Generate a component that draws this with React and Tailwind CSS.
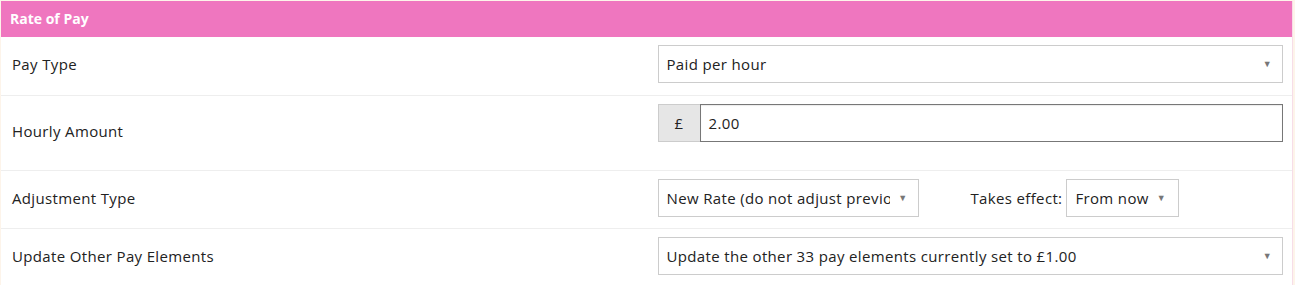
import React from 'react'

function Caret() {
  return <span className="text-[9px] text-[#777] shrink-0 ml-[8px]">▼</span>
}

function Select({ value, className = '', fit }) {
  return (
    <div className={`h-[38px] border border-[#ccc] bg-white flex items-center pl-[8px] pr-[10px] text-[15px] text-[#222] ${className}`}>
      <span className={`${fit ? '' : 'flex-1 min-w-0'} whitespace-nowrap overflow-hidden`}>{value}</span>
      <Caret />
    </div>
  )
}

function Row({ label, children, h, last }) {
  return (
    <div className={`grid grid-cols-2 ${last ? '' : 'border-b border-[#eee]'} ${h}`}>
      <div className="pl-[11px] pb-[3px] text-[15px] text-[#222] self-center">{label}</div>
      <div className="pl-[11px] pr-[9px] pt-[8px]">{children}</div>
    </div>
  )
}

export default function App() {
  return (
    <div className="w-[1295px] h-[285px] bg-[#fdf4ea] pt-[1px] pl-[1px] pr-[2px] tracking-[0.35px]" style={{ fontFamily: '"Open Sans", Lato, sans-serif' }}>
      <div className="bg-white border-r border-[#f7dde8]">
        <div className="h-[36px] bg-[#ef76bf] flex items-center pl-[9px] pb-[2px] text-white font-bold text-[14px] tracking-normal">Rate of Pay</div>
        <Row label="Pay Type" h="h-[59px]">
          <Select value="Paid per hour" />
        </Row>
        <Row label="Hourly Amount" h="h-[75px]">
          <div className="flex h-[38px]">
            <div className="w-[42px] bg-[#e6e6e6] border border-[#ccc] border-r-0 flex items-center justify-center text-[15px] text-[#222]">£</div>
            <div className="flex-1 border border-[#777] flex items-center pl-[8px] text-[15px] text-[#222] shadow-[inset_0_1px_1px_rgba(0,0,0,0.08)]">2.00</div>
          </div>
        </Row>
        <Row label="Adjustment Type" h="h-[58px]">
          <div className="flex items-center">
            <Select value="New Rate (do not adjust previous)" className="w-[261px]" />
            <span className="ml-[52px] mr-[4px] text-[15px] text-[#222]">Takes effect:</span>
            <Select value="From now" fit className="pr-[12px]" />
          </div>
        </Row>
        <Row label="Update Other Pay Elements" h="h-[57px]" last>
          <Select value="Update the other 33 pay elements currently set to £1.00" />
        </Row>
      </div>
    </div>
  )
}
